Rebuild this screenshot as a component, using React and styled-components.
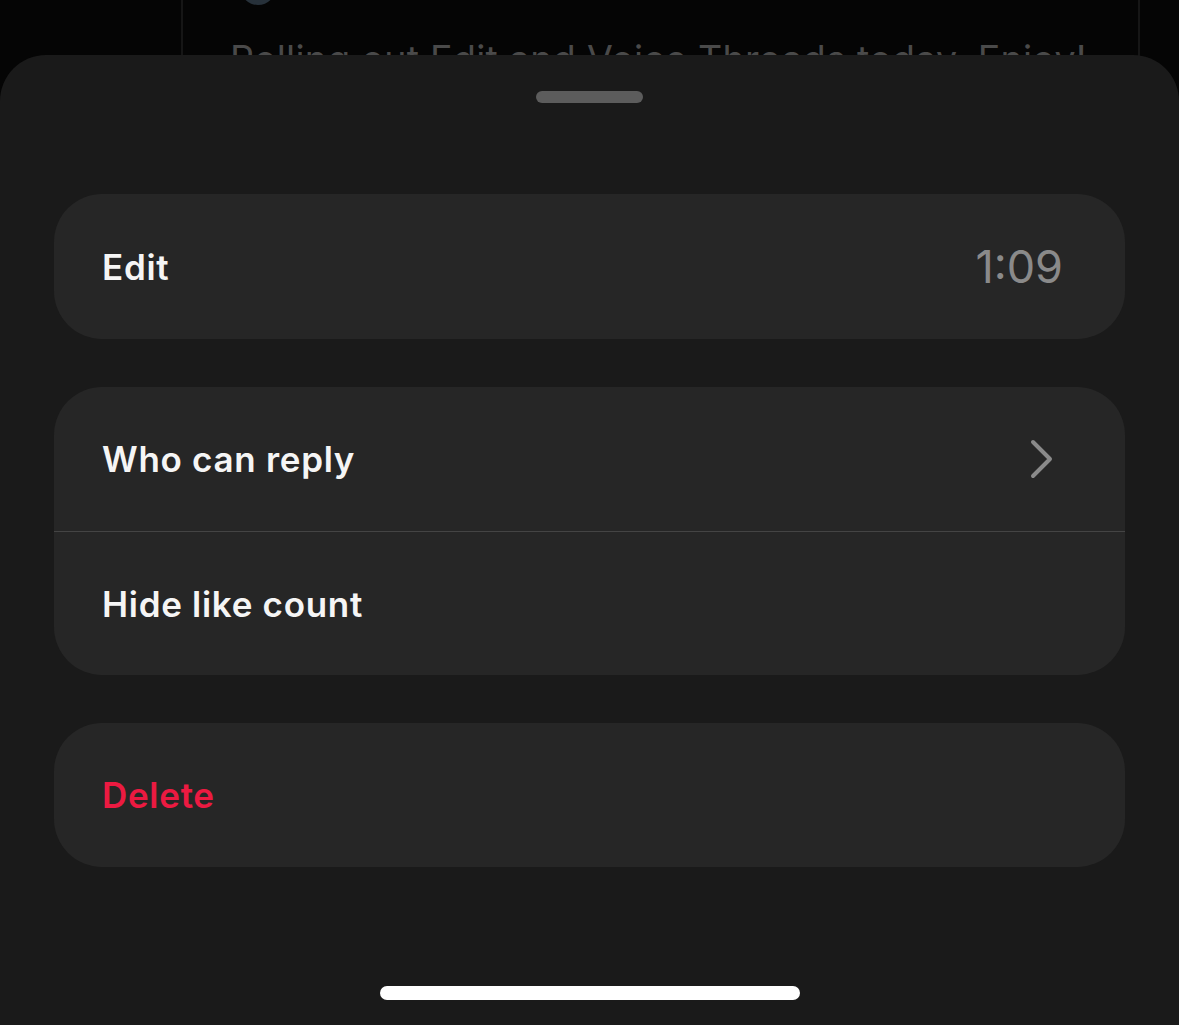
import styled, { createGlobalStyle } from 'styled-components';

const Global = createGlobalStyle`
  html, body {
    margin: 0;
    padding: 0;
    background: #050505;
  }
  * { box-sizing: border-box; }
`

const Screen = styled.div`
  position: relative;
  width: 1179px;
  height: 1025px;
  overflow: hidden;
  background: #050505;
  font-family: Inter, "Noto Sans", sans-serif;
`

const Feed = styled.div`
  margin: 0 39px 0 181px;
  height: 100%;
  border-left: 2px solid #161616;
  border-right: 2px solid #161616;
  padding: 0 0 0 47px;
`

const Avatar = styled.div`
  width: 36px;
  height: 36px;
  margin: -31px 0 0 10px;
  border-radius: 50%;
  background: #27313a;
`

const PostText = styled.p`
  margin: 32px 0 0;
  font-size: 37.5px;
  font-weight: 400;
  color: #4a4a4a;
  white-space: nowrap;
  letter-spacing: 0.3px;
`

const Sheet = styled.div`
  position: absolute;
  top: 55px;
  left: 0;
  right: 0;
  bottom: 0;
  background: #1a1a1a;
  border-radius: 46px 46px 0 0;
  display: flex;
  flex-direction: column;
  align-items: center;
  padding: 36px 54px 0;
`

const Grabber = styled.div`
  width: 107px;
  height: 12px;
  border-radius: 6px;
  background: #5c5c5c;
  margin-bottom: 91px;
`

const Groups = styled.div`
  width: 100%;
  display: flex;
  flex-direction: column;
  gap: 48px;
`

const Group = styled.div`
  background: #262626;
  border-radius: 48px;
  overflow: hidden;
`

const Row = styled.div`
  height: ${p => p.$h || 144}px;
  display: flex;
  align-items: center;
  justify-content: space-between;
  padding: 0 62px 0 48px;
  border-top: ${p => (p.$divider ? '1px solid #444' : 'none')};
`

const Label = styled.span`
  font-size: 35px;
  font-weight: 600;
  letter-spacing: 0.7px;
  color: ${p => (p.$danger ? '#ec1a41' : '#f5f5f5')};
`

const Time = styled.span`
  font-size: 45px;
  font-weight: 400;
  color: #8a8a8a;
`

const Chevron = styled.svg`
  width: 26px;
  height: 42px;
  margin-right: 8px;
`

const HomeBar = styled.div`
  position: absolute;
  left: 380px;
  bottom: 25px;
  width: 420px;
  height: 14px;
  border-radius: 7px;
  background: #ffffff;
`

export default function App() {
  return (
    <Screen>
      <Global />
      <Feed>
        <Avatar />
        <PostText>Rolling out Edit and Voice Threads today. Enjoy!</PostText>
      </Feed>
      <Sheet>
        <Grabber />
        <Groups>
          <Group>
            <Row $h={145}>
              <Label>Edit</Label>
              <Time>1:09</Time>
            </Row>
          </Group>
          <Group>
            <Row>
              <Label>Who can reply</Label>
              <Chevron viewBox="0 0 26 42" fill="none">
                <path d="M4 4 L21 21 L4 38" stroke="#8a8a8a" strokeWidth="4" strokeLinecap="round" strokeLinejoin="round" />
              </Chevron>
            </Row>
            <Row $divider>
              <Label>Hide like count</Label>
            </Row>
          </Group>
          <Group>
            <Row>
              <Label $danger>Delete</Label>
            </Row>
          </Group>
        </Groups>
      </Sheet>
      <HomeBar />
    </Screen>
  )
}
